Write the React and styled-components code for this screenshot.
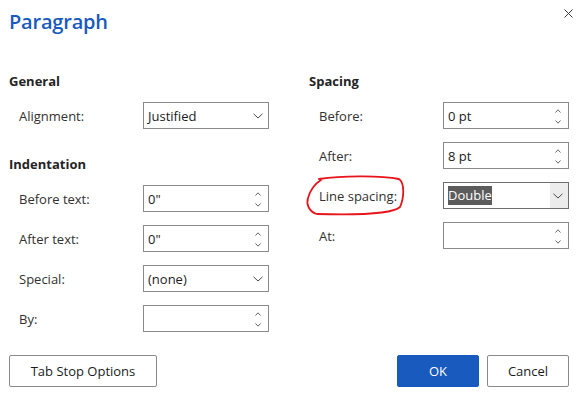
import React from "react";
import styled, { createGlobalStyle } from "styled-components";

const GlobalStyle = createGlobalStyle`
  html, body {
    margin: 0;
    padding: 0;
    background: #fff;
  }
  body {
    font-family: "Open Sans", "Noto Sans", "Liberation Sans", sans-serif;
    font-size: 13px;
    color: #323130;
  }
`;

const Dialog = styled.div`
  box-sizing: border-box;
  width: 581px;
  height: 405px;
  padding: 0 12px 18px 9px;
  display: flex;
  flex-direction: column;
  background: #fff;
`;

const Header = styled.div`
  height: 44px;
  display: flex;
  justify-content: space-between;
  align-items: center;
`;

const Title = styled.h1`
  margin: 0;
  font-size: 20px;
  font-weight: 600;
  color: #185abd;
  line-height: 28px;
  letter-spacing: -0.2px;
`;

const CloseButton = styled.button`
  align-self: flex-start;
  margin-top: 6px;
  margin-right: -6px;
  width: 14px;
  height: 14px;
  padding: 0;
  border: none;
  background: none;
  display: flex;
  align-items: center;
  justify-content: center;
`;

const Columns = styled.div`
  margin-top: 28px;
  display: grid;
  grid-template-columns: 260px 260px;
  column-gap: 40px;
`;

const Section = styled.section`
  margin-top: ${({ $first }) => ($first ? "0" : "26px")};
`;

const Heading = styled.h2`
  margin: 0 0 12px;
  font-size: 13px;
  font-weight: 700;
  line-height: 18px;
  color: #242424;
`;

const Row = styled.div`
  display: grid;
  grid-template-columns: 124px 126px;
  align-items: center;
  padding-left: 10px;
  height: 27px;
  margin-bottom: 13px;
`;

const Label = styled.label`
  position: relative;
  color: #323130;
  white-space: nowrap;
`;

const Field = styled.div`
  box-sizing: border-box;
  height: 27px;
  border: 1px solid ${({ $active }) => ($active ? "#6e6e6e" : "#8a8a8a")};
  background: #fff;
  display: flex;
  align-items: stretch;
`;

const Value = styled.div`
  flex: 1;
  display: flex;
  align-items: center;
  padding-left: 4px;
  color: #1b1b1b;
  white-space: nowrap;
`;

const Selected = styled.span`
  background: #5c5c5c;
  color: #fff;
  line-height: 19px;
`;

const DropButton = styled.div`
  width: 16px;
  display: flex;
  align-items: center;
  justify-content: center;
  background: ${({ $hover }) => ($hover ? "#ececec" : "transparent")};
  padding-right: 2px;
`;

const Spinner = styled.div`
  width: 14px;
  display: flex;
  flex-direction: column;
  justify-content: space-between;
  align-items: center;
  padding: 6px 3px 4px 0;
`;

const Ring = styled.svg`
  position: absolute;
  left: -14px;
  top: -13px;
  width: 102px;
  height: 42px;
  overflow: visible;
  pointer-events: none;
`;

const Footer = styled.div`
  margin-top: auto;
  display: flex;
  justify-content: space-between;
  align-items: center;
`;

const ButtonGroup = styled.div`
  display: flex;
  gap: 8px;
`;

const Button = styled.button`
  box-sizing: border-box;
  height: 32px;
  min-width: 82px;
  padding: 0 16px;
  border-radius: 2px;
  font-family: inherit;
  font-size: 13px;
  border: 1px solid ${({ $primary }) => ($primary ? "#185abd" : "#8a8a8a")};
  background: ${({ $primary }) => ($primary ? "#185abd" : "#fff")};
  color: ${({ $primary }) => ($primary ? "#fff" : "#1b1b1b")};
  width: ${({ $wide }) => ($wide ? "148px" : "82px")};
`;

const Chevron = () => (
  <svg width="10" height="6" viewBox="0 0 10 6">
    <polyline points="0.5,0.8 5,5 9.5,0.8" fill="none" stroke="#4a4a4a" strokeWidth="1" />
  </svg>
);

const Caret = ({ down }) => (
  <svg width="6" height="4" viewBox="0 0 6 4">
    <polyline
      points={down ? "0.5,0.5 3,3.2 5.5,0.5" : "0.5,3.5 3,0.8 5.5,3.5"}
      fill="none"
      stroke="#666"
      strokeWidth="1"
    />
  </svg>
);

function SelectField({ value, highlighted, hover }) {
  return (
    <Field $active={hover}>
      <Value>{highlighted ? <Selected>{value}</Selected> : value}</Value>
      <DropButton $hover={hover}>
        <Chevron />
      </DropButton>
    </Field>
  );
}

function SpinField({ value }) {
  return (
    <Field>
      <Value>{value}</Value>
      <Spinner>
        <Caret />
        <Caret down />
      </Spinner>
    </Field>
  );
}

function FormRow({ label, children, circled }) {
  return (
    <Row>
      <Label>
        {label}
        {circled && (
          <Ring viewBox="0 0 102 42">
            <path
              d="M 14 5 C 40 1, 78 2, 94 5 C 100 9, 99 24, 95 33 C 88 40, 50 41, 12 40 C 4 38, 1 30, 3 24 C 5 17, 8 11, 16 6"
              fill="none"
              stroke="#e8141c"
              strokeWidth="1.8"
              strokeLinecap="round"
            />
          </Ring>
        )}
      </Label>
      {children}
    </Row>
  );
}

export default function App() {
  return (
    <>
      <GlobalStyle />
      <Dialog>
        <Header>
          <Title>Paragraph</Title>
          <CloseButton aria-label="Close">
            <svg width="9" height="9" viewBox="0 0 9 9">
              <path d="M0.5 0.5 L8.5 8.5 M8.5 0.5 L0.5 8.5" stroke="#3a3a3a" strokeWidth="1" />
            </svg>
          </CloseButton>
        </Header>
        <Columns>
          <div>
            <Section $first>
              <Heading>General</Heading>
              <FormRow label="Alignment:">
                <SelectField value="Justified" />
              </FormRow>
            </Section>
            <Section>
              <Heading>Indentation</Heading>
              <FormRow label="Before text:">
                <SpinField value={'0"'} />
              </FormRow>
              <FormRow label="After text:">
                <SpinField value={'0"'} />
              </FormRow>
              <FormRow label="Special:">
                <SelectField value="(none)" />
              </FormRow>
              <FormRow label="By:">
                <SpinField value="" />
              </FormRow>
            </Section>
          </div>
          <div>
            <Section $first>
              <Heading>Spacing</Heading>
              <FormRow label="Before:">
                <SpinField value="0 pt" />
              </FormRow>
              <FormRow label="After:">
                <SpinField value="8 pt" />
              </FormRow>
              <FormRow label="Line spacing:" circled>
                <SelectField value="Double" highlighted hover />
              </FormRow>
              <FormRow label="At:">
                <SpinField value="" />
              </FormRow>
            </Section>
          </div>
        </Columns>
        <Footer>
          <Button $wide>Tab Stop Options</Button>
          <ButtonGroup>
            <Button $primary>OK</Button>
            <Button>Cancel</Button>
          </ButtonGroup>
        </Footer>
      </Dialog>
    </>
  );
}
